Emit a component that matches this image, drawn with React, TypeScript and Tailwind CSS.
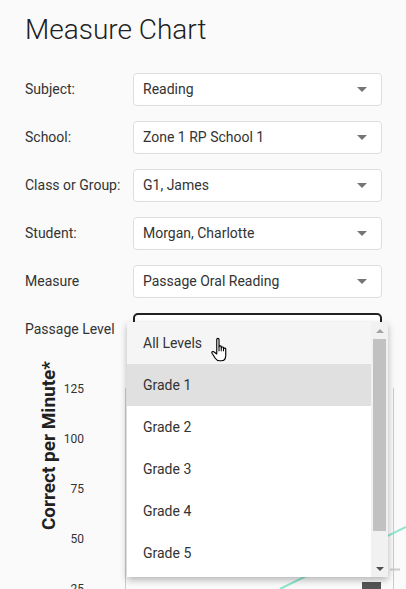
import React from 'react';

type Field = {
  label: string;
  value: string;
};

const fields: Field[] = [
  { label: 'Subject:', value: 'Reading' },
  { label: 'School:', value: 'Zone 1 RP School 1' },
  { label: 'Class or Group:', value: 'G1, James' },
  { label: 'Student:', value: 'Morgan, Charlotte' },
  { label: 'Measure', value: 'Passage Oral Reading' },
];

const levels = ['All Levels', 'Grade 1', 'Grade 2', 'Grade 3', 'Grade 4', 'Grade 5', 'Grade 6'];

const Caret = () => (
  <span className="w-0 h-0 border-x-[5px] border-t-[5px] border-x-transparent border-t-[#757575]" />
);

const HandCursor = () => (
  <svg className="absolute left-[83px] top-[15px] w-[18px] h-[25px]" viewBox="0 0 16 22" fill="none">
    <path
      d="M6 2 C6 0.8 8 0.8 8 2 V8.5 C8 7.5 10 7.5 10 8.5 V9.5 C10 8.5 12 8.5 12 9.5 V10.5 C12 9.5 14 9.5 14 10.5 V16 C14 19 12.5 21 10 21 H8.5 C6.5 21 5.5 20 4.5 18.5 L1.8 14.3 C1.2 13.3 2.3 12.3 3.3 13 L6 15 Z"
      fill="white"
      stroke="black"
      strokeWidth={1}
      strokeLinejoin="round"
    />
    <path d="M8 8.5 V12.5 M10 9.5 V12.5 M12 10.5 V12.5" stroke="black" strokeWidth={0.9} />
  </svg>
);

const App = () => {
  return (
    <div className="relative w-full h-[589px] overflow-hidden bg-[#fafafa] font-['Roboto',_'Liberation_Sans',_sans-serif] text-[#333]">
      {/* Header */}
      <div className="pl-[25px] pr-[24px] pt-[12px]">
        <h1 className="text-[28px] leading-[36px] font-light text-[#212121]">Measure Chart</h1>

        {/* Filters */}
        <div className="mt-[25px] flex flex-col gap-[15px]">
          {fields.map((f) => (
            <div key={f.label} className="flex items-center h-[33px]">
              <div className="w-[108px] text-[14px]">{f.label}</div>
              <div className="flex-1 h-full flex items-center justify-between bg-white border border-[#dddddd] rounded-[4px] pl-[9px] pr-[14px] text-[14px]">
                <span>{f.value}</span>
                <Caret />
              </div>
            </div>
          ))}

          <div className="flex items-center h-[33px]">
            <div className="w-[108px] text-[14px]">Passage Level</div>
            <div className="relative flex-1 h-full">
              <div className="h-full bg-white border-2 border-[#212121] rounded-[5px]" />

              {/* Open dropdown list */}
              <div className="absolute z-10 top-[9px] left-[-6px] w-[261px] h-[255px] flex bg-white shadow-[0_3px_7px_rgba(0,0,0,0.28)] overflow-hidden">
                <div className="relative flex-1 overflow-hidden">
                  {levels.map((lv, i) => (
                    <div
                      key={lv}
                      className={`h-[42px] shrink-0 flex items-center pl-[16px] text-[14px] ${
                        i === 0 ? 'bg-[#f5f5f5]' : i === 1 ? 'bg-[#e0e0e0]' : 'bg-white'
                      }`}
                    >
                      {lv}
                    </div>
                  ))}
                  <HandCursor />
                </div>
                <div className="w-[17px] bg-[#f1f1f1] flex flex-col items-center">
                  <div className="h-[17px] flex items-center justify-center">
                    <span className="w-0 h-0 border-x-[4px] border-b-[4px] border-x-transparent border-b-[#a3a3a3]" />
                  </div>
                  <div className="w-[13px] h-[192px] bg-[#c1c1c1]" />
                  <div className="flex-1" />
                  <div className="h-[17px] flex items-center justify-center">
                    <span className="w-0 h-0 border-x-[4px] border-t-[4px] border-x-transparent border-t-[#505050]" />
                  </div>
                </div>
              </div>
            </div>
          </div>
        </div>
      </div>

      {/* Chart behind the list */}
      <div className="mt-[15px] flex pl-[39px] h-[260px]">
        <div className="w-[20px] h-[170px] flex items-center justify-center shrink-0">
          <span className="[writing-mode:vertical-rl] rotate-180 text-[19px] leading-[20px] font-bold text-[#212121] whitespace-nowrap">
            Correct per Minute*
          </span>
        </div>
        <div className="w-[25px] pt-[3px] flex flex-col shrink-0">
          {['125', '100', '75', '50', '25'].map((t) => (
            <div key={t} className="h-[50px] shrink-0 flex items-center justify-end text-[12px] text-[#333]">
              {t}
            </div>
          ))}
        </div>
        <svg className="ml-[41px] shrink-0" width="281" height="240" viewBox="0 0 281 240">
          <line x1="0.5" y1="27" x2="0.5" y2="240" stroke="#cccccc" strokeWidth="1" />
          <line x1="268.5" y1="27" x2="268.5" y2="240" stroke="#cccccc" strokeWidth="1" />
          <line x1="265" y1="208.5" x2="275" y2="208.5" stroke="#cccccc" strokeWidth="2" />
          <line x1="155" y1="228" x2="281" y2="166" stroke="#8ee6cf" strokeWidth="2" />
          <rect x="237" y="221" width="19" height="12" fill="#555555" />
        </svg>
      </div>
    </div>
  );
};

export default App;
